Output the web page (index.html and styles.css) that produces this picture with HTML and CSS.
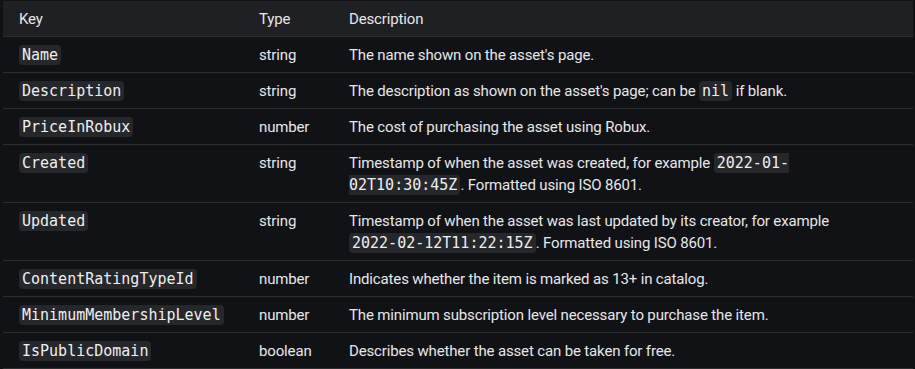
FILE: index.html
```html
<!DOCTYPE html>
<html lang="en">
<head>
  <meta charset="UTF-8" />
  <meta name="viewport" content="width=device-width, initial-scale=1.0" />
  <title>Asset info</title>
  <link rel="stylesheet" href="styles.css">
</head>

<body>
  <table class="props">
    <thead>
      <tr>
        <th class="col-key">Key</th>
        <th class="col-type">Type</th>
        <th>Description</th>
      </tr>
    </thead>
    <tbody>
      <tr>
        <td><code>Name</code></td>
        <td>string</td>
        <td>The name shown on the asset's page.</td>
      </tr>
      <tr>
        <td><code>Description</code></td>
        <td>string</td>
        <td>The description as shown on the asset's page; can be <code>nil</code> if blank.</td>
      </tr>
      <tr>
        <td><code>PriceInRobux</code></td>
        <td>number</td>
        <td>The cost of purchasing the asset using Robux.</td>
      </tr>
      <tr>
        <td><code>Created</code></td>
        <td>string</td>
        <td>Timestamp of when the asset was created, for example <code><span class="nb">2022-01-</span><wbr><span class="nb">02T10:30:45Z</span></code>. Formatted using ISO 8601.</td>
      </tr>
      <tr>
        <td><code>Updated</code></td>
        <td>string</td>
        <td>Timestamp of when the asset was last updated by its creator, for example <code><span class="nb">2022-02-</span><wbr><span class="nb">12T11:22:15Z</span></code>. Formatted using ISO 8601.</td>
      </tr>
      <tr>
        <td><code>ContentRatingTypeId</code></td>
        <td>number</td>
        <td>Indicates whether the item is marked as 13+ in catalog.</td>
      </tr>
      <tr>
        <td><code>MinimumMembershipLevel</code></td>
        <td>number</td>
        <td>The minimum subscription level necessary to purchase the item.</td>
      </tr>
      <tr>
        <td><code>IsPublicDomain</code></td>
        <td>boolean</td>
        <td>Describes whether the asset can be taken for free.</td>
      </tr>
    </tbody>
  </table>
</body>
</html>
```

FILE: styles.css
```css
* {
  margin: 0;
  padding: 0;
  box-sizing: border-box;
}

body {
  font-family: 'Roboto', 'Noto Sans', sans-serif;
  font-size: 15px;
  letter-spacing: -0.15px;
  color: #e6e7e9;
  background-color: #111216;
  padding: 1px 2px 0 3px;
}

.props {
  width: 100%;
  border-collapse: collapse;
  table-layout: fixed;
}

.props th,
.props td {
  text-align: left;
  vertical-align: top;
  line-height: 22px;
  padding: 7px 16px 6px;
  border-bottom: 1px solid #2c2d31;
}

.props th {
  font-weight: 400;
  background-color: #1f2024;
}

.col-key {
  width: 240px;
}

.col-type {
  width: 90px;
}

code {
  font-family: 'DejaVu Sans Mono', 'Liberation Mono', monospace;
  font-size: 15px;
  letter-spacing: 0;
  background-color: #26272b;
  color: #eeeff1;
  border-radius: 4px;
  padding: 1px 3px;
}

.nb {
  white-space: nowrap;
}
```
